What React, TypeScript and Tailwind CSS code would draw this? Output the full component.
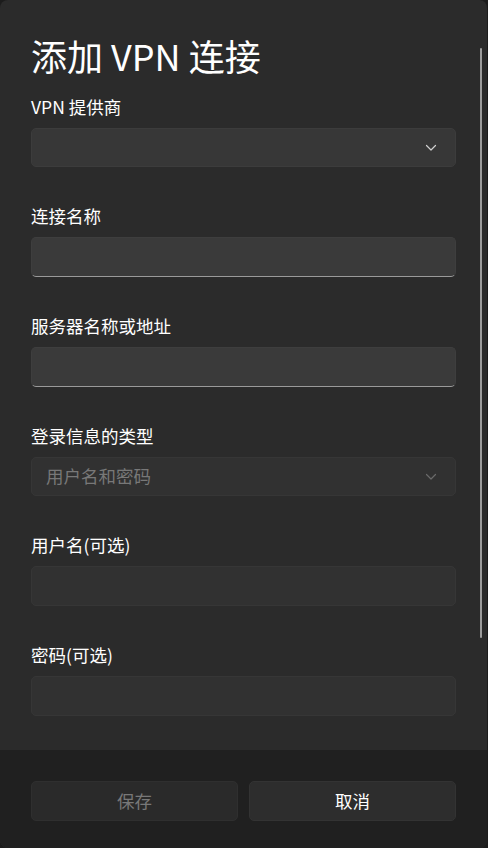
const font = { fontFamily: '"Noto Sans CJK SC", "Noto Sans", sans-serif' };

const Chevron = ({ disabled }: { disabled?: boolean }) => (
  <svg width="12" height="8" viewBox="0 0 12 8" className="shrink-0">
    <polyline
      points="1.5,1.5 6,6 10.5,1.5"
      fill="none"
      stroke={disabled ? '#6a6a6a' : '#cfcfcf'}
      strokeWidth="1.2"
      strokeLinecap="round"
      strokeLinejoin="round"
    />
  </svg>
);

const Label = ({ children }: { children: React.ReactNode }) => (
  <div className="h-[24px] mb-[9px] text-[17.5px] leading-[24px] text-white">{children}</div>
);

const ComboBox = ({ value, disabled }: { value?: string; disabled?: boolean }) => (
  <div
    className={`h-[39px] rounded-[5px] border flex items-center justify-between pl-[14px] pr-[18px] ${
      disabled ? 'bg-[#313131] border-[#363636]' : 'bg-[#373737] border-[#3c3c3c]'
    }`}
  >
    <span className="text-[17.5px] text-[#787878]">{value}</span>
    <Chevron disabled={disabled} />
  </div>
);

const TextBox = ({ disabled }: { disabled?: boolean }) =>
  disabled ? (
    <div className="h-[40px] rounded-[5px] border border-[#363636] bg-[#313131]" />
  ) : (
    <div className="h-[40px] rounded-[5px] border border-[#3e3e3e] border-b-[#9a9a9a] bg-[#3a3a3a]" />
  );

export default function App() {
  return (
    <div className="w-[488px] h-[848px] bg-[#1c1c1c]" style={font}>
      <div className="relative w-full h-full rounded-[8px] overflow-hidden flex flex-col bg-[#2b2b2b] border-r border-[#1c1c1c]">
        <div className="flex-1 pt-[33px] pl-[31px] pr-[31px]">
          <h1 className="h-[44px] leading-[44px] text-[36px] font-normal text-white mb-[18px]">添加 VPN 连接</h1>

          <div className="flex flex-col gap-[37px]">
            <div>
              <Label>VPN 提供商</Label>
              <ComboBox />
            </div>
            <div>
              <Label>连接名称</Label>
              <TextBox />
            </div>
            <div>
              <Label>服务器名称或地址</Label>
              <TextBox />
            </div>
            <div>
              <Label>登录信息的类型</Label>
              <ComboBox value="用户名和密码" disabled />
            </div>
            <div>
              <Label>用户名(可选)</Label>
              <TextBox disabled />
            </div>
            <div>
              <Label>密码(可选)</Label>
              <TextBox disabled />
            </div>
          </div>
        </div>

        <div className="absolute right-[5px] top-[48px] h-[590px] w-[2px] rounded-full bg-[#9c9c9c]" />

        <div className="h-[98px] bg-[#202020] px-[31px] pt-[31px] flex gap-[11px]">
          <button className="flex-1 h-[40px] rounded-[5px] border border-[#2f2f2f] bg-[#2a2a2a] text-[17.5px] text-[#787878]">
            保存
          </button>
          <button className="flex-1 h-[40px] rounded-[5px] border border-[#333333] bg-[#2d2d2d] text-[17.5px] text-white">
            取消
          </button>
        </div>
      </div>
    </div>
  );
}
